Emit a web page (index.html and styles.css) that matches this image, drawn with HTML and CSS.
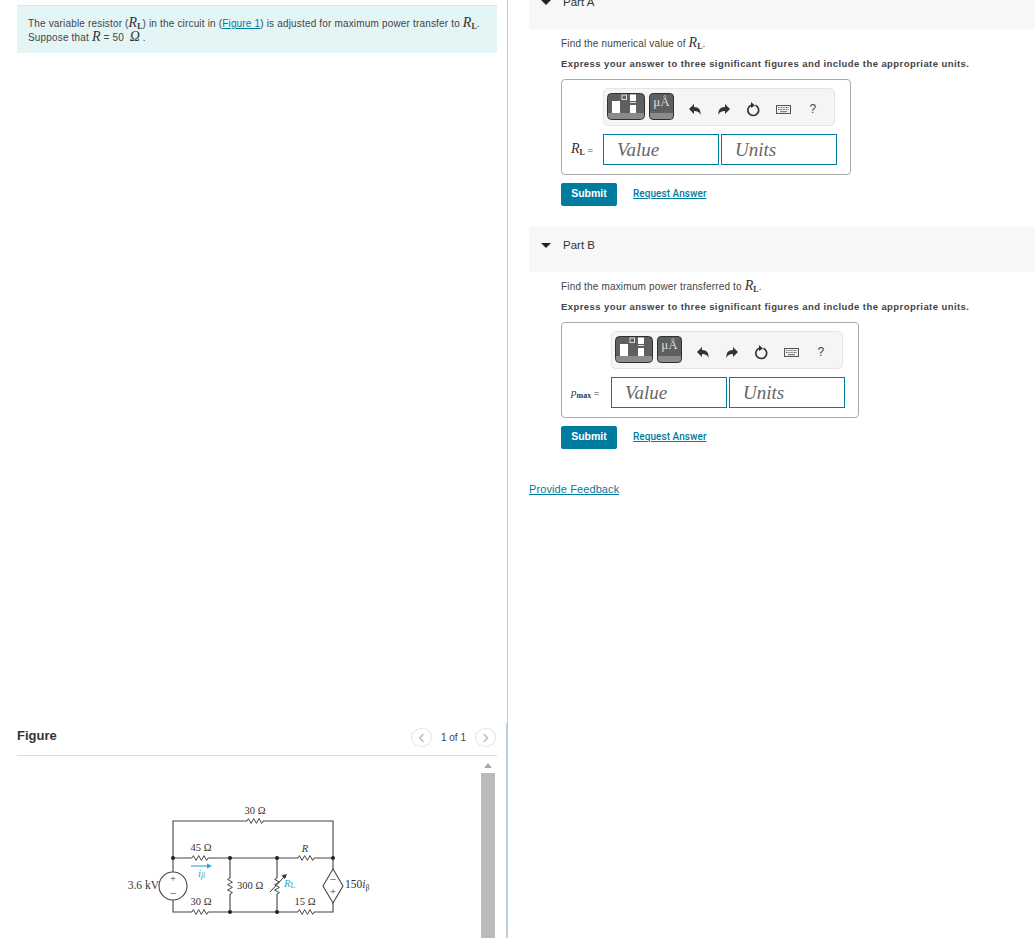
FILE: index.html
```html
<!DOCTYPE html>
<html lang="en">
<head>
<meta charset="utf-8">
<title>Maximum power transfer</title>
<link rel="stylesheet" href="styles.css">
</head>
<body>
<svg class="defs" width="0" height="0" aria-hidden="true">
  <defs>
    <path id="res-h" d="M-8 0l1.4-2.4 2.7 4.8 2.6-4.8 2.7 4.8 2.600-4.800 2.700 4.800 1.400-2.400" fill="none" stroke="#333" stroke-width=".9"/>
    <path id="res-v" d="M0-8l-2.400 1.400 4.800 2.700-4.800 2.600 4.800 2.700-4.800 2.600 4.800 2.700-2.400 1.400" fill="none" stroke="#333" stroke-width=".9"/>
    <g id="ic-undo"><path d="M1 6l5-5v3c5 0 7 3 6.500 8-1-3-3-4-6.500-4v3z" fill="#333"/></g>
    <g id="ic-redo"><path d="M13 6L8 1v3c-5 0-7 3-6.500 8 1-3 3-4 6.500-4v3z" fill="#333"/></g>
    <g id="ic-reload"><path d="M9.500 3.200a5.400 5.400 0 1 1-4.500 0" fill="none" stroke="#333" stroke-width="1.700"/><path d="M5 0l4 3.400-4 2.600z" fill="#333"/></g>
    <g id="ic-keys">
      <rect x=".5" y=".5" width="14" height="8" fill="#f2f2f2" stroke="#555"/>
      <path d="M2 2.500h11M2 4.500h11" stroke="#666" stroke-dasharray="1 .6"/>
      <path d="M4 6.700h7" stroke="#666"/>
    </g>
    <g id="ic-template">
      <rect x=".5" y=".5" width="37" height="26" rx="4" fill="#5f5f5f" stroke="#2f2f2f"/>
      <path d="M1 20h36v2.500a3.500 3.500 0 0 1-3.500 3.500h-29A3.500 3.500 0 0 1 1 22.500z" fill="#8b8b8b"/>
      <rect x="5" y="8" width="8" height="12" fill="#fff"/>
      <rect x="15" y="2" width="4.500" height="4.500" fill="none" stroke="#ddd"/>
      <rect x="23" y="1.500" width="6" height="6.500" fill="#fff"/>
      <rect x="23" y="9" width="6" height="1" fill="#ddd"/>
      <rect x="23" y="12" width="6" height="8" fill="#fff"/>
    </g>
  </defs>
</svg>

<div class="page">
  <section class="left">
    <div class="intro">
      The variable resistor (<span class="math">R<sub>L</sub></span>) in the circuit in (<a class="link" href="#fig">Figure 1</a>) is adjusted for maximum power transfer to <span class="math">R<sub>L</sub></span>.<br>
      Suppose that <span class="math">R</span> = 50 &nbsp;<span class="math">Ω</span> .
    </div>

    <div class="figure" id="fig">
      <header class="figure-head">
        <h2 class="figure-title">Figure</h2>
        <div class="pager">
          <span class="pager-btn">&#8249;</span>
          <span class="pager-count">1 of 1</span>
          <span class="pager-btn">&#8250;</span>
        </div>
      </header>
      <div class="figure-body">
        <svg class="circuit" width="464" height="182" viewBox="17 756 464 182">
          <g fill="none" stroke="#444" stroke-width="1.100">
            <path d="M173 872V821H247M263 821H333V869M173 858H192M208 858H298M314 858H333M173 900V912H192M208 912H298M314 912H333V903M230 858V878M230 894V912M277 858V878M277 894V912"/>
            <circle cx="173" cy="886" r="14"/>
            <path d="M333 869L343 886 333 903 323 886z"/>
          </g>
          <use href="#res-h" x="255" y="821"/>
          <use href="#res-h" x="200" y="858"/>
          <use href="#res-h" x="306" y="858"/>
          <use href="#res-h" x="200" y="912"/>
          <use href="#res-h" x="306" y="912"/>
          <use href="#res-v" x="230" y="886"/>
          <use href="#res-v" x="277" y="886"/>
          <path d="M270 892L284 877" stroke="#333" stroke-width="1"/>
          <path d="M287 874l-5.500 1.500 3.500 3.500z" fill="#333"/>
          <path d="M191 866H208" stroke="#2aa5dc" stroke-width="1.100"/>
          <path d="M212 866l-5-2.500v5z" fill="#2aa5dc"/>
          <g fill="#222">
            <circle cx="173" cy="858" r="2"/><circle cx="230" cy="858" r="2"/><circle cx="277" cy="858" r="2"/><circle cx="333" cy="858" r="2"/>
            <circle cx="230" cy="912" r="2"/><circle cx="277" cy="912" r="2"/>
          </g>
          <g class="c-text">
            <text x="255" y="814" text-anchor="middle">30 Ω</text>
            <text x="201" y="851" text-anchor="middle">45 Ω</text>
            <text x="305" y="852" text-anchor="middle" class="c-it">R</text>
            <text x="201" y="905" text-anchor="middle">30 Ω</text>
            <text x="305" y="905" text-anchor="middle">15 Ω</text>
            <text x="159" y="889" text-anchor="end" class="c-big">3.6 kV</text>
            <text x="237" y="889">300 Ω</text>
            <text x="345" y="888" class="c-big">150<tspan class="c-it">i</tspan><tspan class="c-sub" dy="1.500">β</tspan></text>
            <text x="198" y="877" class="c-it c-blue">i<tspan class="c-sub" dy="1">β</tspan></text>
            <text x="284" y="887" class="c-it c-blue">R<tspan class="c-sub c-up" dy="1">L</tspan></text>
            <text x="173" y="882" text-anchor="middle">+</text>
            <text x="173" y="896" text-anchor="middle">–</text>
            <text x="333" y="882" text-anchor="middle">–</text>
            <text x="333" y="895" text-anchor="middle">+</text>
          </g>
        </svg>
        <div class="scrollbar">
          <span class="scroll-arrow"></span>
          <span class="scroll-thumb"></span>
        </div>
      </div>
    </div>
    <span class="edge"></span>
  </section>

  <main class="right">
    <section class="part">
      <header class="part-head"><span class="caret"></span><span>Part A</span></header>
      <div class="part-body">
        <p class="prompt">Find the numerical value of <span class="math">R<sub>L</sub></span>.</p>
        <p class="hint">Express your answer to three significant figures and include the appropriate units.</p>
        <div class="answer">
          <div class="toolbar">
            <svg class="tpl" width="38" height="27"><use href="#ic-template"/></svg>
            <span class="unit-btn">μÅ</span>
            <span class="tool"><svg width="14" height="13"><use href="#ic-undo"/></svg></span>
            <span class="tool"><svg width="14" height="13"><use href="#ic-redo"/></svg></span>
            <span class="tool"><svg width="15" height="15"><use href="#ic-reload"/></svg></span>
            <span class="tool"><svg width="15" height="9"><use href="#ic-keys"/></svg></span>
            <span class="tool tool-help">?</span>
          </div>
          <span class="var var-r"><span class="math">R<sub>L</sub></span> =</span>
          <div class="fields"><div class="field">Value</div><div class="field">Units</div></div>
        </div>
        <div class="actions"><button class="submit" type="button">Submit</button><a class="request" href="#a">Request Answer</a></div>
      </div>
    </section>

    <section class="part part-b">
      <header class="part-head"><span class="caret"></span><span>Part B</span></header>
      <div class="part-body">
        <p class="prompt">Find the maximum power transferred to <span class="math">R<sub>L</sub></span>.</p>
        <p class="hint">Express your answer to three significant figures and include the appropriate units.</p>
        <div class="answer">
          <div class="toolbar">
            <svg class="tpl" width="38" height="27"><use href="#ic-template"/></svg>
            <span class="unit-btn">μÅ</span>
            <span class="tool"><svg width="14" height="13"><use href="#ic-undo"/></svg></span>
            <span class="tool"><svg width="14" height="13"><use href="#ic-redo"/></svg></span>
            <span class="tool"><svg width="15" height="15"><use href="#ic-reload"/></svg></span>
            <span class="tool"><svg width="15" height="9"><use href="#ic-keys"/></svg></span>
            <span class="tool tool-help">?</span>
          </div>
          <span class="var var-p"><span class="math math-p">p<sub>max</sub></span> =</span>
          <div class="fields"><div class="field">Value</div><div class="field">Units</div></div>
        </div>
        <div class="actions"><button class="submit" type="button">Submit</button><a class="request" href="#b">Request Answer</a></div>
      </div>
    </section>

    <a class="feedback" href="#f">Provide Feedback</a>
  </main>
</div>
</body>
</html>
```

FILE: styles.css
```css
* { box-sizing: border-box; }
html, body { margin: 0; height: 938px; overflow: hidden; background: #fff; }
body { font-family: "Liberation Sans", Arial, sans-serif; color: #333; }
.defs { position: absolute; }
.page { display: flex; height: 938px; overflow: hidden; }

.left { position: relative; flex: 0 0 508px; height: 938px; padding: 5px 10px 0 17px; border-right: 1px solid #ccc; }
.edge { position: absolute; right: -1px; top: 723px; bottom: 0; width: 2px; background: #b9cfe2; }
.intro { height: 48px; padding: 11px 8px 0 11px; border-top: 1px solid #dde3e6; background: #e4f5f6; font-size: 10px; letter-spacing: .17px; line-height: 14px; color: #444; }
.math { font-family: "Liberation Serif", "Times New Roman", serif; font-style: italic; font-size: 14px; line-height: 0; letter-spacing: 0; color: #333; }
.math sub { font-size: 8px; font-style: normal; font-weight: bold; vertical-align: -2px; line-height: 0; }
.link { color: #007c9e; text-decoration: underline; }

.figure { margin-top: 671px; }
.figure-head { display: flex; align-items: center; justify-content: space-between; height: 32px; border-bottom: 1px solid #ddd; }
.figure-title { margin: 0; font-size: 13px; font-weight: bold; color: #333; position: relative; top: -4px; }
.pager { display: flex; align-items: center; gap: 9px; padding-right: 1px; margin-top: -4px; }
.pager-btn { display: flex; align-items: center; justify-content: center; width: 21px; height: 19px; padding-bottom: 3px; border: 1px solid #e4e4e4; border-radius: 50%; font-size: 20px; line-height: 1; color: #bbb; }
.pager-count { font-size: 10px; color: #444; }

.figure-body { display: flex; height: 182px; overflow: hidden; }
.circuit { flex: none; display: block; }
.c-text { font-family: "Liberation Serif", "Times New Roman", serif; font-size: 10.500px; fill: #333; }
.c-big { font-size: 11.500px; }
.c-it { font-style: italic; }
.c-sub { font-size: 8px; }
.c-up { font-style: normal; }
.c-blue { fill: #2aa5dc; }
.scrollbar { flex: 0 0 15px; display: flex; flex-direction: column; align-items: flex-start; background: #fff; }
.scroll-arrow { margin: 7px 0 0 3px; width: 0; height: 0; border-left: 4px solid transparent; border-right: 4px solid transparent; border-bottom: 5px solid #a9a9a9; }
.scroll-thumb { margin-top: 5px; flex: 1; width: 14px; background: #bbb; }

.right { flex: 1; min-width: 0; padding-left: 21px; margin-top: -16px; }
.part-head { display: flex; align-items: center; height: 45px; padding-bottom: 9px; background: #f7f7f7; font-size: 11.500px; color: #333; }
.caret { width: 0; height: 0; margin: 0 12px; border-left: 5px solid transparent; border-right: 5px solid transparent; border-top: 5px solid #222; }
.part-body { padding-left: 32px; }
.part-b { margin-top: 21px; }
.prompt { margin: 0; padding-top: 8px; height: 28px; font-size: 10px; letter-spacing: .17px; line-height: 14px; color: #444; }
.hint { margin: 0; height: 22px; font-size: 9.500px; line-height: 14px; font-weight: bold; letter-spacing: .43px; color: #444; }

.answer { display: grid; grid-template-columns: auto auto; align-items: center; row-gap: 8px; width: max-content; padding: 8px 13px 9px 9px; border: 1px solid #aaa; border-radius: 4px; }
.toolbar { grid-column: 2; display: flex; align-items: center; width: 232px; height: 38px; padding: 0 3px; background: #f5f5f5; border: 1px solid #e4e4e4; border-radius: 5px; }
.tpl { flex: none; display: block; margin-top: -1px; }
.unit-btn { flex: none; width: 25px; height: 27px; margin: -1px 6px 0 4px; text-align: center; border: 1px solid #2f2f2f; border-radius: 4px; background: linear-gradient(#5f5f5f 0 19px, #8b8b8b 19px); font-family: "Liberation Serif", serif; font-size: 13px; color: #ddd; }
.tool { flex: 0 0 29.500px; display: flex; justify-content: center; align-items: center; margin-top: 4px; }
.tool svg { display: block; }
.tool-help { font-size: 12px; color: #444; }
.var { grid-column: 1; font-size: 9.500px; color: #444; }
.var-r { width: 32px; }
.var-p { width: 40px; }
.math-p { font-size: 11px; }
.math-p sub { font-size: 8px; }
.fields { display: flex; gap: 2px; }
.field { width: 116px; height: 31px; padding-left: 13px; border: 1px solid #007c9e; font-family: "Liberation Serif", "Times New Roman", serif; font-style: italic; font-size: 19px; line-height: 29px; color: #666; }

.actions { display: flex; align-items: center; gap: 16px; margin-top: 8px; }
.submit { width: 56px; height: 23px; padding: 0 0 3px; border: 0; border-radius: 2px; background: #007c9e; color: #fff; font: bold 10.500px "Liberation Sans", Arial, sans-serif; }
.request { margin-top: -3px; font-family: Roboto, "Liberation Sans", sans-serif; font-size: 10px; font-weight: 500; letter-spacing: .05px; color: #007c9e; text-decoration: underline; }
.feedback { display: block; margin-top: 33px; font-size: 11px; line-height: 14px; letter-spacing: .1px; color: #007c9e; text-decoration: underline; }
```
